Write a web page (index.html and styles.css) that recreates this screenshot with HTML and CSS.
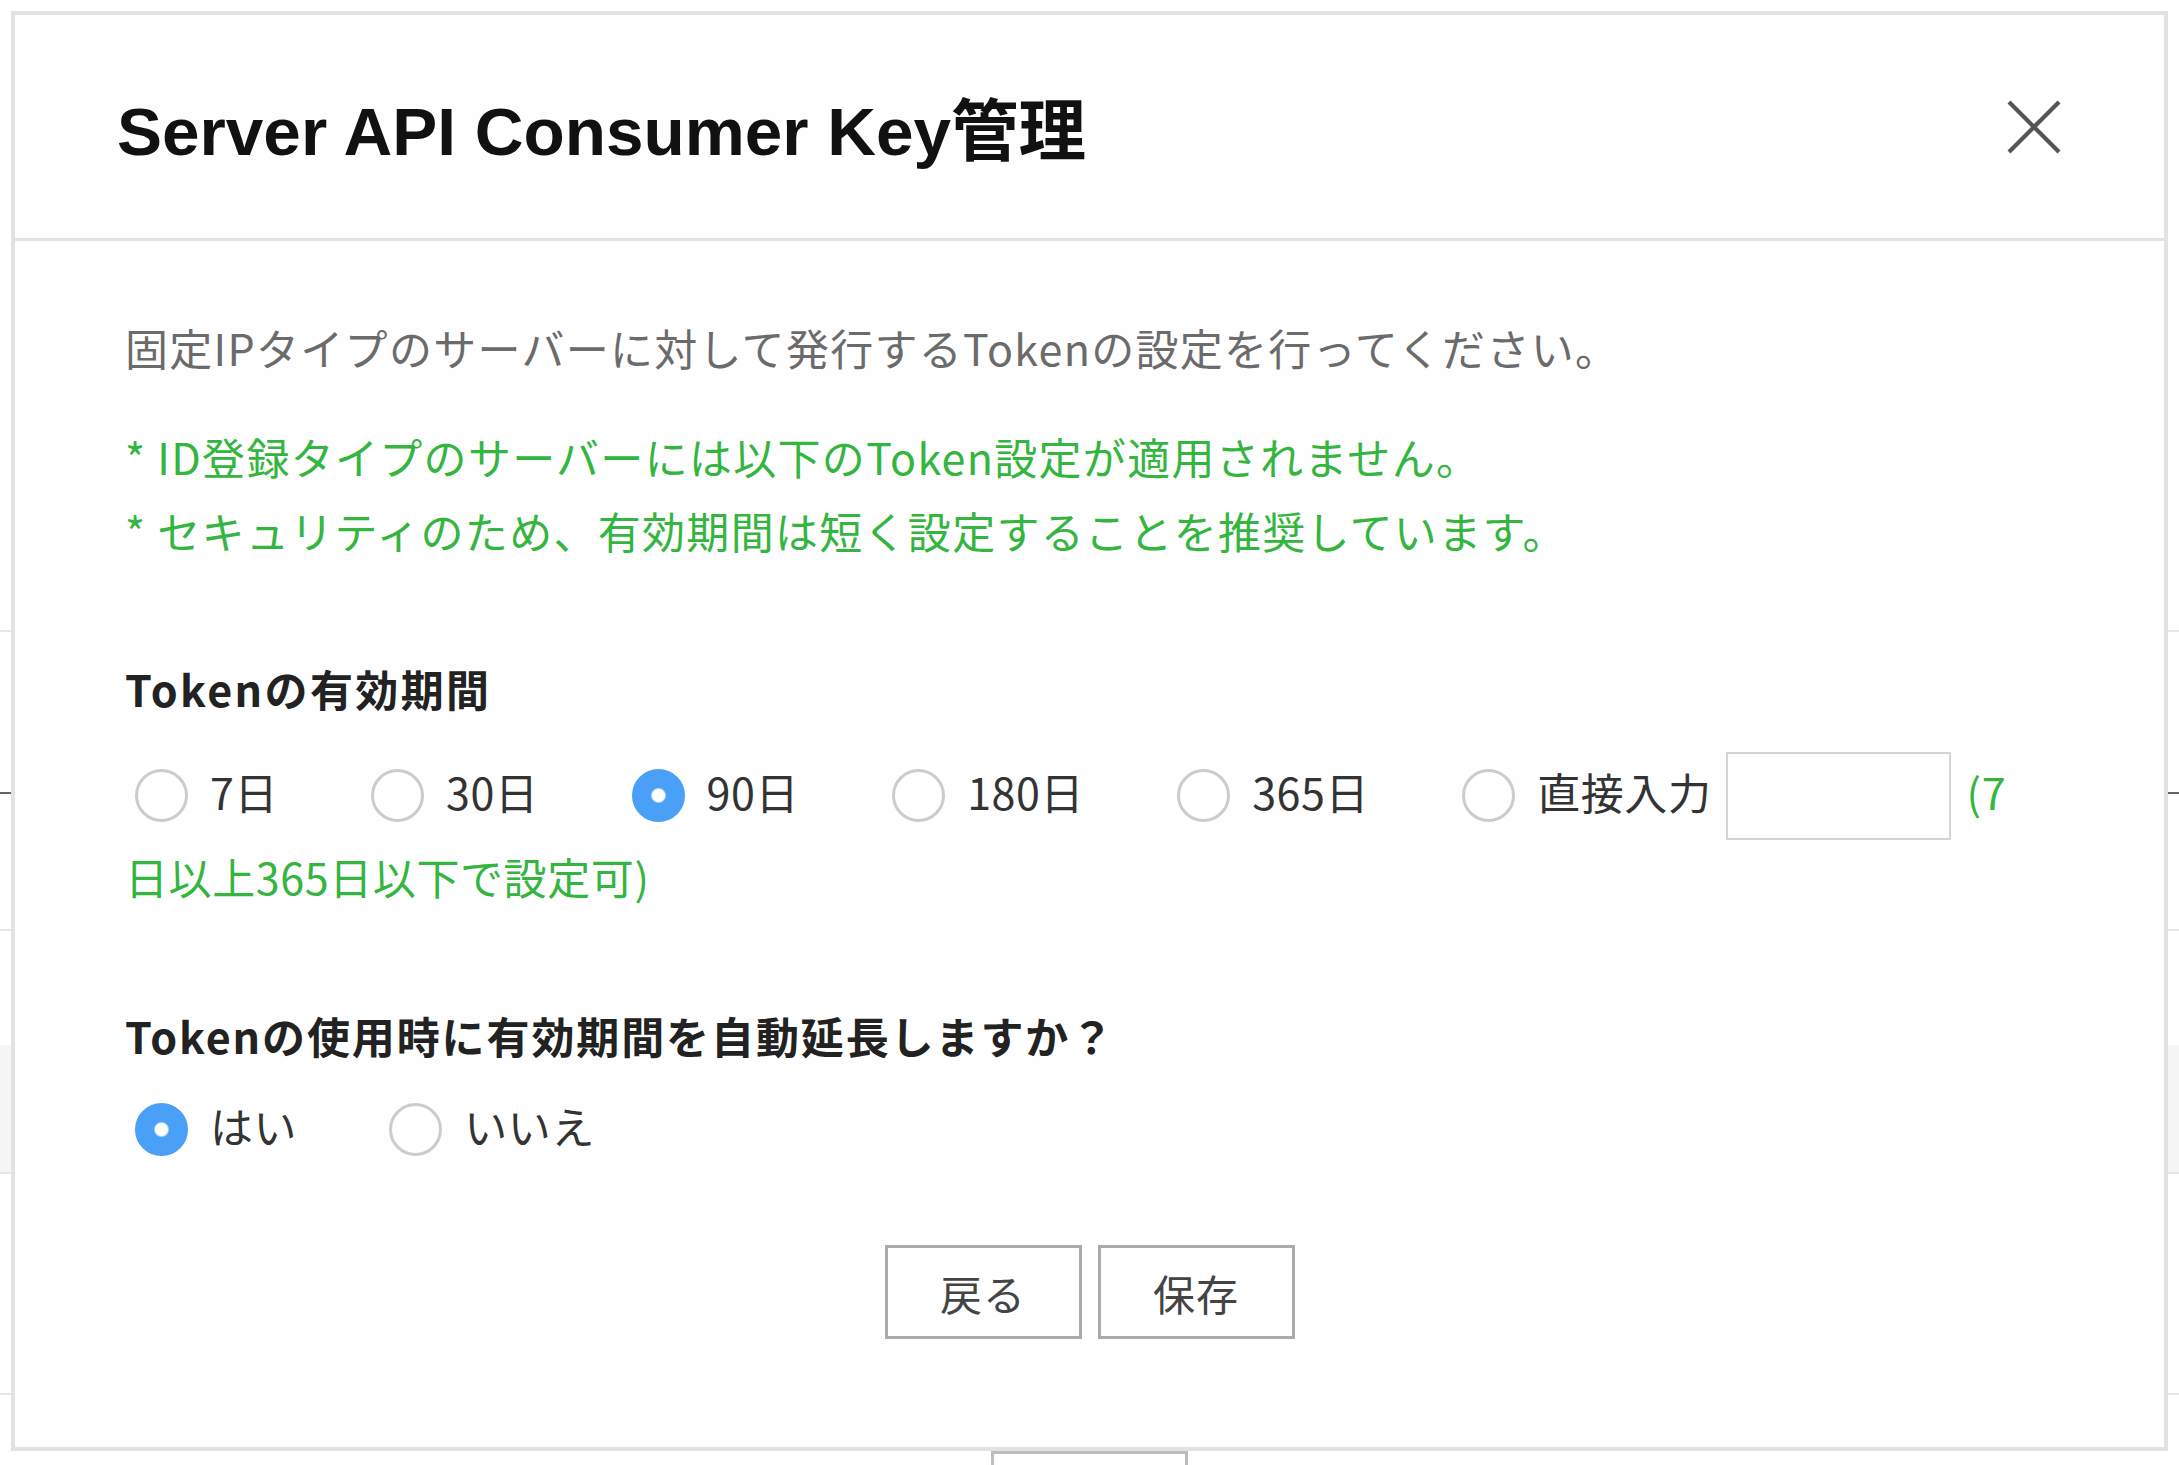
FILE: index.html
```html
<!DOCTYPE html>
<html lang="ja">
<head>
<meta charset="utf-8">
<title>Server API Consumer Key管理</title>
<link rel="stylesheet" href="styles.css">
</head>
<body>
<div class="page">
  <div class="bg-row r1"></div>
  <div class="bg-row r2"></div>
  <div class="bg-row r3"></div>
  <div class="bg-row r4"></div>
  <div class="bg-row r5"></div>
  <div class="bg-row r6"></div>
  <div class="bg-spacer"></div>
  <div class="bg-box"></div>
</div>

<div class="modal">
  <div class="modal-header">
    <h1 class="modal-title">Server API Consumer Key管理</h1>
    <button class="close" type="button" aria-label="close">
      <svg viewBox="0 0 54 54" width="54" height="54"><path d="M2 2 L52 52 M52 2 L2 52" stroke="#555" stroke-width="4.2" fill="none"/></svg>
    </button>
  </div>
  <div class="modal-body">
    <p class="intro">固定IPタイプのサーバーに対して発行するTokenの設定を行ってください。</p>
    <p class="notes">* ID登録タイプのサーバーには以下のToken設定が適用されません。<br>* セキュリティのため、有効期間は短く設定することを推奨しています。</p>

    <h2 class="section-title">Tokenの有効期間</h2>
    <div class="options period"><label class="opt"><span class="radio"></span>7日</label><label class="opt"><span class="radio"></span>30日</label><label class="opt"><span class="radio checked"></span>90日</label><label class="opt"><span class="radio"></span>180日</label><label class="opt"><span class="radio"></span>365日</label><label class="opt direct"><span class="radio"></span>直接入力</label><span class="input-box"></span><span class="hint">(7日以上365日以下で設定可)</span></div>

    <h2 class="section-title second">Tokenの使用時に有効期間を自動延長しますか？</h2>
    <div class="options renew"><label class="opt yes"><span class="radio checked"></span>はい</label><label class="opt"><span class="radio"></span>いいえ</label></div>

    <div class="actions">
      <button class="btn" type="button">戻る</button>
      <button class="btn" type="button">保存</button>
    </div>
  </div>
</div>
</body>
</html>
```

FILE: styles.css
```css
* { box-sizing: border-box; }

html, body {
  margin: 0;
  padding: 0;
  width: 2179px;
  height: 1465px;
  overflow: hidden;
  background: #ffffff;
  font-family: "Noto Sans CJK JP", "Noto Sans", sans-serif;
}

/* page behind the dialog */
.page {
  position: relative;
  width: 2179px;
}
.bg-row { width: 100%; }
.r1 { height: 632px; border-bottom: 2px solid #e6e6e6; }
.r2 { height: 162px; border-bottom: 2px solid #666666; }
.r3 { height: 137px; border-bottom: 2px solid #e6e6e6; }
.r4 { height: 114px; }
.r5 { height: 129px; background: #f5f5f5; border-bottom: 2px solid #e6e6e6; }
.r6 { height: 221px; border-bottom: 2px solid #e6e6e6; }
.bg-spacer { height: 56px; }
.bg-box {
  margin-left: 991px;
  width: 197px;
  height: 40px;
  border: 3px solid #bdbdbd;
  border-bottom: none;
}

/* dialog */
.modal {
  position: absolute;
  left: 11px;
  top: 11px;
  width: 2157px;
  height: 1440px;
  background: #fefefe;
  border: 4px solid #e2e2e2;
}

.modal-header {
  height: 226px;
  border-bottom: 3px solid #e3e3e3;
  display: flex;
  align-items: center;
  justify-content: space-between;
  padding: 0 103px 0 102px;
}

.modal-title {
  margin: 10px 0 0 0;
  font-family: "Liberation Sans", "Noto Sans CJK JP", sans-serif;
  font-weight: 700;
  font-size: 67.5px;
  line-height: 1;
  color: #111111;
  letter-spacing: 0;
}

.close {
  width: 54px;
  height: 54px;
  padding: 0;
  border: none;
  background: none;
  display: flex;
}

.modal-body {
  padding: 74px 110px 0 110px;
}

.intro {
  margin: 0;
  font-size: 43px;
  line-height: 64px;
  color: #6b6b6b;
  letter-spacing: 1.3px;
}

.notes {
  margin: 40px 0 0 0;
  font-size: 43px;
  line-height: 74px;
  color: #34b540;
  letter-spacing: 1.3px;
}

.section-title {
  margin: 89px 0 0 0;
  font-size: 43px;
  line-height: 64px;
  font-weight: 700;
  color: #222222;
  letter-spacing: 2.4px;
}
.section-title.second { margin-top: 86px; letter-spacing: 1.9px; }

.options {
  margin-top: 31px;
  font-size: 43px;
  line-height: 81px;
  color: #333333;
  letter-spacing: 0.6px;
}
.options.period { padding-right: 16px; }

.opt {
  display: inline-block;
  margin-right: 83px;
  white-space: nowrap;
}
.opt.direct { margin-right: 14px; }
.opt.yes { margin-right: 82px; }

.radio {
  display: inline-block;
  width: 53px;
  height: 53px;
  border-radius: 50%;
  border: 3px solid #cccccc;
  background: #ffffff;
  vertical-align: middle;
  margin: -6px 22px 0 10px;
}
.radio.checked {
  border-color: #4aa0f6;
  background: radial-gradient(circle, #ffffff 0, #ffffff 6px, #4aa0f6 8px);
}

.input-box {
  display: inline-block;
  width: 225px;
  height: 88px;
  border: 2px solid #d4d4d4;
  background: #ffffff;
  vertical-align: middle;
  margin: -8px 16px -4px 0;
}

.hint {
  color: #34b540;
}

.renew { margin-top: 18px; }

.actions {
  margin-top: 79px;
  display: flex;
  justify-content: center;
  gap: 16px;
}

.btn {
  width: 197px;
  height: 94px;
  border: 3px solid #aaaaaa;
  background: #ffffff;
  font-family: "Noto Sans CJK JP", sans-serif;
  font-size: 42px;
  color: #444444;
  padding: 0;
  letter-spacing: 1px;
}
```
